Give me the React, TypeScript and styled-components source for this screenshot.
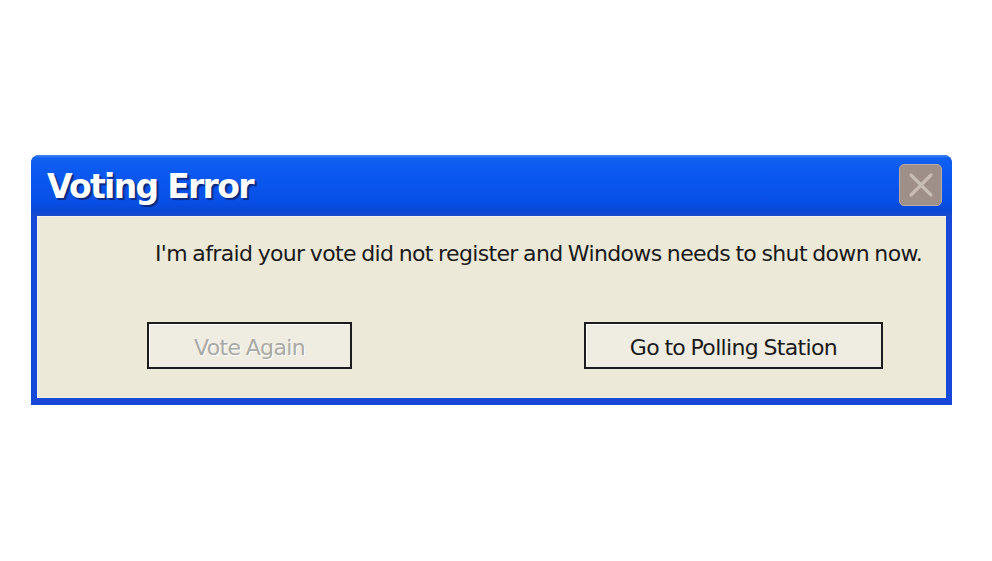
import React from "react";
import styled, { createGlobalStyle } from "styled-components";

const Global = createGlobalStyle`
  html, body { margin: 0; padding: 0; background: #ffffff; }
  body { width: 992px; height: 561px; overflow: hidden; }
`;

const Page = styled.div`
  padding: 155px 0 0 31px;
`;

const Window = styled.div`
  width: 921px;
  box-sizing: border-box;
  background: #1848d8;
  border-radius: 8px 8px 0 0;
  padding: 0 6px 7px 6px;
`;

const TitleBar = styled.div`
  height: 61px;
  display: flex;
  align-items: center;
  justify-content: space-between;
  margin: 0 -6px;
  padding-left: 16px;
  padding-right: 10px;
  border-radius: 8px 8px 0 0;
  background: linear-gradient(
    to bottom,
    #4a8af8 0px,
    #1060f0 3px,
    #0a58f0 20px,
    #0850e8 45px,
    #0848d8 55px,
    #1a4ac8 61px
  );
`;

const Title = styled.div`
  font-family: "DejaVu Sans", "Verdana", sans-serif;
  font-weight: bold;
  font-size: 33px;
  letter-spacing: -1.7px;
  color: #ffffff;
  text-shadow: 2px 2px 1px #0a2a80;
  margin-top: 2px;
`;

const CloseButton = styled.div`
  width: 43px;
  height: 42px;
  box-sizing: border-box;
  border-radius: 5px;
  background: #9e8f88;
  border: 1px solid #b8aaa4;
  display: flex;
  align-items: center;
  justify-content: center;
  margin-top: -2px;
`;

const Body = styled.div`
  background: #ece9d8;
  height: 182px;
  box-sizing: border-box;
  border-left: 1px solid #f4f2ea;
  border-bottom: 1px solid #f4f2ea;
  border-top: 1px solid #f4f2ea;
  padding: 24px 0 0 117px;
  display: flex;
  flex-direction: column;
`;

const Message = styled.div`
  font-family: "DejaVu Sans", "Verdana", sans-serif;
  font-size: 22px;
  letter-spacing: -0.65px;
  word-spacing: -1px;
  color: #1a1a1a;
  line-height: 26px;
`;

const ButtonRow = styled.div`
  display: flex;
  gap: 232px;
  margin-top: 55px;
  margin-left: -8px;
`;

const Button = styled.div<{ $w: number; $disabled?: boolean }>`
  width: ${(p) => p.$w}px;
  height: 47px;
  box-sizing: border-box;
  border: 2px solid #1c1c1c;
  background: #efede2;
  box-shadow: inset 1px 1px 0 #ffffff;
  display: flex;
  align-items: center;
  justify-content: center;
  padding-top: 3px;
  font-family: "DejaVu Sans", "Verdana", sans-serif;
  font-size: 22px;
  letter-spacing: -0.65px;
  word-spacing: -1px;
  color: ${(p) => (p.$disabled ? "#a9a9a4" : "#1a1a1a")};
  text-shadow: ${(p) => (p.$disabled ? "1px 1px 0 #ffffff" : "none")};
`;

export default function App() {
  return (
    <>
      <Global />
      <Page>
        <Window>
          <TitleBar>
            <Title>Voting Error</Title>
            <CloseButton>
              <svg width="26" height="26" viewBox="0 0 26 26">
                <path d="M3 3 L23 23 M23 3 L3 23" stroke="#c8bcb6" strokeWidth="3.2" strokeLinecap="round" />
              </svg>
            </CloseButton>
          </TitleBar>
          <Body>
            <Message>
              I'm afraid your vote did not register and Windows needs to shut down now.
            </Message>
            <ButtonRow>
              <Button $w={205} $disabled>Vote Again</Button>
              <Button $w={299}>Go to Polling Station</Button>
            </ButtonRow>
          </Body>
        </Window>
      </Page>
    </>
  );
}
